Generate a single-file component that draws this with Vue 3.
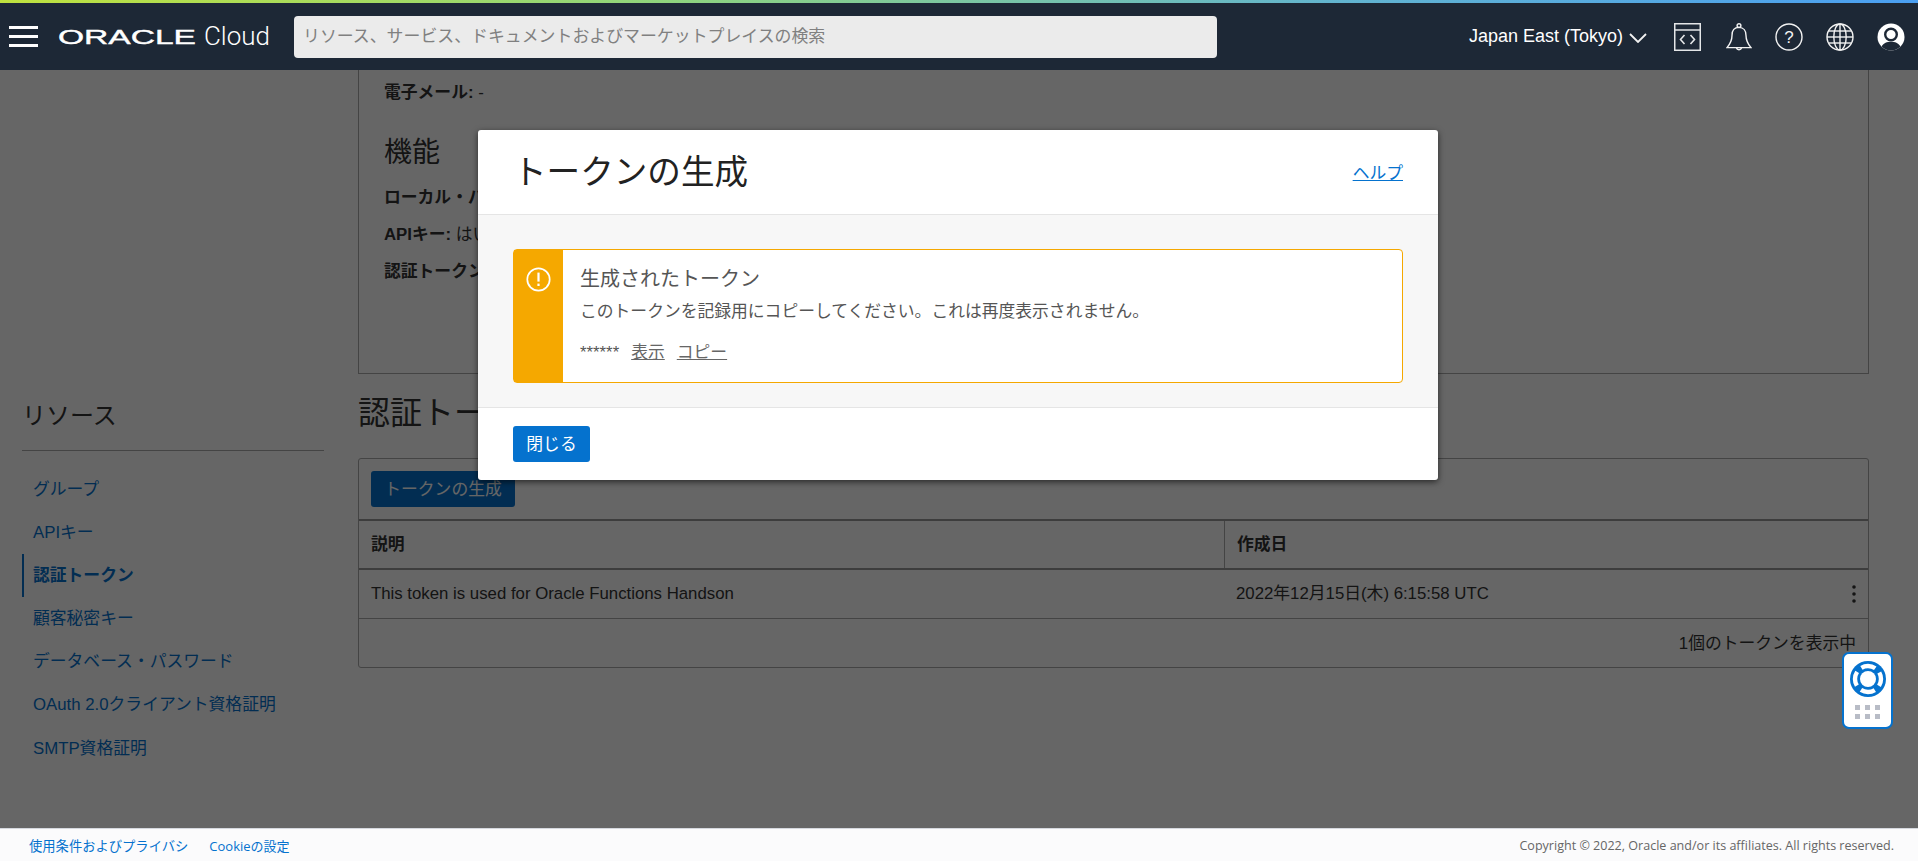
<script setup>
const sideLinks = [
  { label: 'グループ' },
  { label: 'APIキー' },
  { label: '認証トークン', active: true },
  { label: '顧客秘密キー' },
  { label: 'データベース・パスワード' },
  { label: 'OAuth 2.0クライアント資格証明' },
  { label: 'SMTP資格証明' }
]
</script>

<template>
  <div class="page">
    <div class="top-line"></div>
    <header class="navbar">
      <div class="burger"><span></span><span></span><span></span></div>
      <svg class="logo" width="215" height="30" viewBox="0 0 215 30">
        <text x="0" y="21.5" textLength="138" lengthAdjust="spacingAndGlyphs" class="logo-oracle">ORACLE</text>
        <text x="146" y="23" textLength="66" lengthAdjust="spacingAndGlyphs" class="logo-cloud">Cloud</text>
      </svg>
      <div class="search">リソース、サービス、ドキュメントおよびマーケットプレイスの検索</div>
      <div class="nav-right">
        <span class="region">Japan East (Tokyo)</span>
        <svg class="chevron" width="18" height="10" viewBox="0 0 18 10">
          <polyline points="1,1 9,9 17,1" fill="none" stroke="#f2f2f2" stroke-width="1.8" />
        </svg>
        <svg class="icon code-icon" width="27" height="28" viewBox="0 0 27 28" fill="none" stroke="#e4e6e8">
          <rect x="0.75" y="0.75" width="25.5" height="26.5" stroke-width="1.5" />
          <line x1="1" y1="7" x2="26" y2="7" stroke-width="1.5" />
          <polyline points="10.5,12 6.5,16.5 10.5,21" stroke-width="1.6" />
          <polyline points="16.5,12 20.5,16.5 16.5,21" stroke-width="1.6" />
        </svg>
        <svg class="icon bell-icon" width="26" height="29" viewBox="0 0 26 29" fill="none" stroke="#f2f2f2" stroke-width="1.4">
          <circle cx="13" cy="2.6" r="1.9" />
          <path d="M13 4.4c-4.6 0-7 3.4-7 8 0 5-1.8 8.4-5 12.2h24c-3.2-3.8-5-7.2-5-12.2 0-4.6-2.4-8-7-8z" />
          <path d="M10.4 24.8a2.7 2.7 0 0 0 5.2 0" />
        </svg>
        <svg class="icon help-icon" width="28" height="28" viewBox="0 0 28 28">
          <circle cx="14" cy="14" r="13" fill="none" stroke="#f2f2f2" stroke-width="1.4" />
          <text x="14" y="20" text-anchor="middle" class="help-mark">?</text>
        </svg>
        <svg class="icon globe-icon" width="28" height="28" viewBox="0 0 28 28" fill="none" stroke="#f2f2f2" stroke-width="1.4">
          <circle cx="14" cy="14" r="13" />
          <ellipse cx="14" cy="14" rx="6.2" ry="13" />
          <line x1="14" y1="1" x2="14" y2="27" />
          <line x1="2.6" y1="8" x2="25.4" y2="8" />
          <line x1="1" y1="14" x2="27" y2="14" />
          <line x1="2.6" y1="20" x2="25.4" y2="20" />
        </svg>
        <svg class="icon avatar-icon" width="28" height="28" viewBox="0 0 28 28">
          <circle cx="14" cy="14" r="13.5" fill="#fff" />
          <path d="M4.6 23.6c2-3.6 5.4-4.8 9.4-4.8s7.4 1.2 9.4 4.8a13 13 0 0 1-18.8 0z" fill="#1d2836" />
          <circle cx="14" cy="11.5" r="5.8" fill="#fff" stroke="#1d2836" stroke-width="2.4" />
        </svg>
      </div>
    </header>

    <div class="content">
      <aside class="sidebar">
        <h2 class="side-title">リソース</h2>
        <ul class="side-list">
          <li v-for="link in sideLinks" :key="link.label" class="side-item" :class="{ active: link.active }">
            {{ link.label }}
          </li>
        </ul>
      </aside>

      <main class="main">
        <section class="detail-card">
          <p class="detail-row"><b>電子メール:</b> -</p>
          <h3 class="detail-heading">機能</h3>
          <p class="detail-row first"><b>ローカル・パスワード:</b> はい</p>
          <p class="detail-row"><b>APIキー:</b> はい</p>
          <p class="detail-row"><b>認証トークン:</b> はい</p>
        </section>

        <h2 class="section-title">認証トークン</h2>

        <section class="token-table">
          <div class="table-actions">
            <button class="create-button">トークンの生成</button>
          </div>
          <div class="table-head">
            <div class="cell">説明</div>
            <div class="cell divided">作成日</div>
          </div>
          <div class="table-row">
            <div class="cell">This token is used for Oracle Functions Handson</div>
            <div class="cell date-cell">
              <span>2022年12月15日(木) 6:15:58 UTC</span>
              <svg width="4" height="18" viewBox="0 0 4 18" fill="#333">
                <circle cx="2" cy="2" r="1.8" />
                <circle cx="2" cy="9" r="1.8" />
                <circle cx="2" cy="16" r="1.8" />
              </svg>
            </div>
          </div>
          <div class="table-foot">1個のトークンを表示中</div>
        </section>
      </main>

      <div class="overlay"></div>
    </div>

    <footer class="footer">
      <div class="footer-links">
        <span>使用条件およびプライバシ</span>
        <span class="cookie-link">Cookieの設定</span>
      </div>
      <span class="copyright">Copyright © 2022, Oracle and/or its affiliates. All rights reserved.</span>
    </footer>

    <div class="modal">
      <div class="modal-header">
        <h1 class="modal-title">トークンの生成</h1>
        <span class="modal-help">ヘルプ</span>
      </div>
      <div class="modal-body">
        <div class="alert">
          <div class="alert-side">
            <svg width="25" height="25" viewBox="0 0 25 25">
              <circle cx="12.5" cy="12.5" r="11.2" fill="none" stroke="#fff" stroke-width="1.7" />
              <rect x="11.4" y="5.6" width="2.2" height="9" fill="#fff" />
              <rect x="11.4" y="16.6" width="2.2" height="2.4" fill="#fff" />
            </svg>
          </div>
          <div class="alert-text">
            <div class="alert-title">生成されたトークン</div>
            <div class="alert-message">このトークンを記録用にコピーしてください。これは再度表示されません。</div>
            <div class="alert-token">
              <span class="stars">******</span>
              <a class="token-link">表示</a>
              <a class="token-link">コピー</a>
            </div>
          </div>
        </div>
      </div>
      <div class="modal-footer">
        <button class="close-button">閉じる</button>
      </div>
    </div>

    <div class="help-widget">
      <svg width="38" height="38" viewBox="0 0 38 38">
        <circle cx="19" cy="19" r="18" fill="#0572ce" />
        <circle cx="19" cy="19" r="13" fill="none" stroke="#fff" stroke-width="4.4" stroke-dasharray="14.6 5.82" stroke-dashoffset="7.3" />
        <circle cx="19" cy="19" r="8" fill="#fff" />
      </svg>
      <div class="widget-dots">
        <span v-for="n in 6" :key="n"></span>
      </div>
    </div>
  </div>
</template>

<style scoped>
.page {
  position: relative;
  width: 1918px;
  height: 861px;
  display: flex;
  flex-direction: column;
  overflow: hidden;
  font-family: "Liberation Sans", "Noto Sans CJK JP", sans-serif;
  font-size: 16.8px;
  color: #333;
  background: #fff;
}

.top-line {
  height: 3px;
  background: linear-gradient(90deg, #bfe23f 0%, #8fd47e 35%, #62b4d0 70%, #4a9ff2 100%);
}

.navbar {
  height: 67px;
  display: flex;
  align-items: center;
  background: #1d2836;
  color: #fff;
}

.burger {
  width: 29px;
  margin-left: 9px;
  display: flex;
  flex-direction: column;
  gap: 6.5px;
}

.burger span {
  height: 2.5px;
  background: #fff;
}

.logo {
  margin-left: 20px;
  margin-top: 1px;
}

.logo-oracle {
  font-family: "Liberation Sans", sans-serif;
  font-size: 20px;
  fill: #fff;
  stroke: #fff;
  stroke-width: 0.4px;
}

.logo-cloud {
  font-family: Roboto, sans-serif;
  font-size: 25px;
  font-weight: 300;
  fill: #fff;
}

.search {
  width: 914px;
  height: 42px;
  margin-left: 21px;
  padding-left: 9px;
  border-radius: 4px;
  background: #ebebeb;
  color: #808080;
  font-size: 16.9px;
  line-height: 42px;
}

.nav-right {
  margin-left: auto;
  display: flex;
  align-items: center;
  padding-right: 13px;
}

.region {
  font-size: 18px;
  color: #fff;
}

.chevron {
  margin-left: 6px;
  margin-top: 3px;
}

.icon {
  display: block;
}

.code-icon {
  margin-left: 27px;
}

.bell-icon {
  margin-left: 25px;
  margin-top: 2px;
}

.help-icon {
  margin-left: 23px;
}

.help-mark {
  font-family: "Liberation Sans", sans-serif;
  font-size: 17px;
  fill: #f2f2f2;
}

.globe-icon {
  margin-left: 23px;
}

.avatar-icon {
  margin-left: 23px;
}

.content {
  position: relative;
  flex: 1;
  display: flex;
  overflow: hidden;
}

.overlay {
  position: absolute;
  inset: 0;
  background: rgba(0, 0, 0, 0.6);
}

.sidebar {
  width: 358px;
  padding: 326px 34px 0 22px;
  box-sizing: border-box;
  flex: none;
}

.side-title {
  margin: 0;
  padding-bottom: 14px;
  border-bottom: 1px solid #aaa;
  font-size: 24px;
  font-weight: 400;
  line-height: 40px;
  color: #333;
}

.side-list {
  list-style: none;
  margin: 17px 0 0;
  padding: 0;
}

.side-item {
  height: 43.1px;
  line-height: 43.1px;
  padding-left: 11px;
  font-size: 16.8px;
  color: #0572ce;
}

.side-item.active {
  border-left: 2px solid #0572ce;
  padding-left: 9px;
  font-weight: 700;
}

.main {
  width: 1511px;
  flex: none;
}

.detail-card {
  height: 304px;
  box-sizing: border-box;
  padding: 4px 25px 0;
  border: 1px solid #aaa;
  border-top: none;
}

.detail-row {
  margin: 0;
  line-height: 37px;
}

.detail-row.first {
  margin-top: 6px;
}

.detail-heading {
  margin: 22px 0 0;
  font-size: 28px;
  font-weight: 400;
  line-height: 40px;
}

.section-title {
  margin: 19px 0 25px;
  font-size: 32px;
  font-weight: 400;
  line-height: 40px;
  color: #333;
}

.token-table {
  border: 1px solid #aaa;
  border-radius: 3px;
}

.table-actions {
  height: 60px;
  box-sizing: border-box;
  padding: 12px 12px 0;
}

.create-button {
  width: 144px;
  height: 36px;
  padding: 0 0 3px;
  border: none;
  border-radius: 3px;
  background: #0572ce;
  color: #fff;
  font-family: inherit;
  font-size: 16.8px;
}

.table-head,
.table-row {
  display: grid;
  grid-template-columns: 865px 1fr;
  box-sizing: border-box;
}

.table-head {
  height: 51px;
  border-top: 2px solid #999;
  border-bottom: 2px solid #999;
  font-weight: 700;
}

.table-row {
  height: 49px;
  border-bottom: 1px solid #aaa;
}

.cell {
  display: flex;
  align-items: center;
  padding: 0 12px;
  line-height: 24px;
}

.divided {
  border-left: 1px solid #aaa;
}

.date-cell {
  justify-content: space-between;
  padding-right: 12px;
}

.table-foot {
  height: 48px;
  line-height: 50px;
  padding-right: 12px;
  text-align: right;
}

.footer {
  height: 33px;
  box-sizing: border-box;
  display: flex;
  align-items: center;
  justify-content: space-between;
  padding: 0 24px 0 29px;
  border-top: 1px solid #d5d8de;
  background: #fbfbfc;
  font-family: "Open Sans", "Noto Sans CJK JP", sans-serif;
  font-size: 13.3px;
}

.footer-links {
  display: flex;
  gap: 21px;
  color: #0572ce;
}

.cookie-link {
  font-size: 13px;
}

.copyright {
  font-size: 12.55px;
  color: #666;
}

.modal {
  position: absolute;
  top: 130px;
  left: 478px;
  width: 960px;
  height: 350px;
  border-radius: 3px;
  background: #fff;
  box-shadow: 0 2px 6px rgba(0, 0, 0, 0.6);
  display: flex;
  flex-direction: column;
}

.modal-header {
  height: 84px;
  box-sizing: border-box;
  display: flex;
  align-items: center;
  justify-content: space-between;
  padding: 0 35px;
}

.modal-title {
  margin: -5px 0 0;
  font-size: 33.6px;
  font-weight: 400;
  color: #222;
}

.modal-help {
  font-size: 16.8px;
  color: #0572ce;
  text-decoration: underline;
}

.modal-body {
  height: 194px;
  flex: none;
  box-sizing: border-box;
  padding: 34px 35px 0;
  background: #f7f7f7;
  border-top: 1px solid #e5e5e5;
  border-bottom: 1px solid #e5e5e5;
}

.alert {
  height: 134px;
  box-sizing: border-box;
  display: flex;
  border: 1px solid #f5a800;
  border-radius: 4px;
  background: #fff;
}

.alert-side {
  width: 49px;
  flex: none;
  padding-top: 17px;
  box-sizing: border-box;
  text-align: center;
  background: #f5a800;
}

.alert-text {
  padding: 15px 0 0 17px;
  color: #555;
}

.alert-title {
  font-size: 20px;
  line-height: 28px;
}

.alert-message {
  margin-top: 5px;
  line-height: 28px;
}

.alert-token {
  display: flex;
  align-items: center;
  gap: 12px;
  margin-top: 13px;
  line-height: 28px;
}

.stars {
  font-size: 16.8px;
}

.token-link {
  text-decoration: underline;
  color: #666;
}

.modal-footer {
  flex: 1;
  box-sizing: border-box;
  padding: 18px 35px 0;
}

.close-button {
  width: 77px;
  height: 36px;
  padding: 0 0 2px;
  border: none;
  border-radius: 3px;
  background: #0572ce;
  color: #fff;
  font-family: inherit;
  font-size: 16.8px;
}

.help-widget {
  position: absolute;
  top: 652px;
  left: 1842px;
  width: 51px;
  height: 77px;
  box-sizing: border-box;
  padding-top: 6px;
  border: 2px solid #0572ce;
  border-radius: 7px;
  background: #fff;
  display: flex;
  flex-direction: column;
  align-items: center;
}

.widget-dots {
  margin-top: 7px;
  display: grid;
  grid-template-columns: repeat(3, 5px);
  gap: 4px 5px;
}

.widget-dots span {
  width: 5px;
  height: 5px;
  background: #b8bcc6;
}
</style>
